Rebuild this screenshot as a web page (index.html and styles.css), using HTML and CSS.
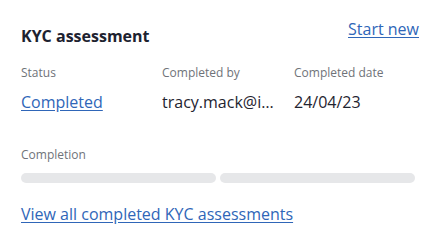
FILE: index.html
```html
<!DOCTYPE html>
<html>
<head>
<meta charset="utf-8">
<link rel="stylesheet" href="styles.css">
</head>
<body>
<div class="card">
  <div class="header">
    <h2 class="title">KYC assessment</h2>
    <a class="link" href="#">Start new</a>
  </div>
  <div class="fields">
    <div class="field">
      <div class="label">Status</div>
      <a class="value link" href="#">Completed</a>
    </div>
    <div class="field">
      <div class="label">Completed by</div>
      <div class="value truncate">tracy.mack@iwoca.co.uk</div>
    </div>
    <div class="field">
      <div class="label">Completed date</div>
      <div class="value">24/04/23</div>
    </div>
  </div>
  <div class="completion">
    <div class="label">Completion</div>
    <div class="bars">
      <div class="bar"></div>
      <div class="bar"></div>
    </div>
  </div>
  <a class="link footer-link" href="#">View all completed KYC assessments</a>
</div>
</body>
</html>
```
FILE: styles.css
```css
html, body {
  margin: 0;
  padding: 0;
  background: #ffffff;
}
body {
  font-family: "Open Sans", "Noto Sans", sans-serif;
  color: #1f2430;
}
.card {
  padding: 17px 20px 0 21px;
  display: flex;
  flex-direction: column;
}
.header {
  display: flex;
  justify-content: space-between;
  align-items: flex-start;
}
.title {
  margin: 7px 0 0 0;
  font-size: 16px;
  line-height: 24px;
  font-weight: 700;
  color: #1d2230;
}
.link {
  color: #2f66b8;
  text-decoration: underline;
  text-underline-offset: 2px;
  font-size: 16px;
  line-height: 24px;
}
.fields {
  margin-top: 17px;
  display: grid;
  grid-template-columns: 129px 120px 1fr;
  column-gap: 12px;
}
.field {
  display: flex;
  flex-direction: column;
  gap: 9px;
  min-width: 0;
}
.label {
  font-size: 12px;
  line-height: 16px;
  color: #6f7379;
}
.value {
  font-size: 16px;
  line-height: 24px;
  color: #1f2430;
}
.value.link {
  color: #2f66b8;
  align-self: flex-start;
}
.truncate {
  white-space: nowrap;
  overflow: hidden;
  text-overflow: ellipsis;
}
.completion {
  margin-top: 33px;
  display: flex;
  flex-direction: column;
  gap: 10px;
}
.bars {
  display: flex;
  gap: 4px;
  width: 394px;
}
.bar {
  flex: 1;
  height: 10px;
  border-radius: 5px;
  background: #e6e7e9;
}
.footer-link {
  margin-top: 19px;
  align-self: flex-start;
}
```
